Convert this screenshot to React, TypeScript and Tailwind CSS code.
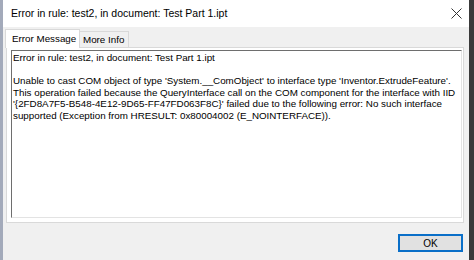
const lines = [
  "Unable to cast COM object of type 'System.__ComObject' to interface type 'Inventor.ExtrudeFeature'.",
  'This operation failed because the QueryInterface call on the COM component for the interface with IID',
  "'{2FD8A7F5-B548-4E12-9D65-FF47FD063F8C}' failed due to the following error: No such interface",
  'supported (Exception from HRESULT: 0x80004002 (E_NOINTERFACE)).',
];

export default function App() {
  return (
    <div className="flex h-[260px] w-[474px] overflow-hidden bg-[#f0f0f0] font-['Liberation_Sans',Arial,sans-serif] text-black">
      <div className="w-[3px] shrink-0 bg-[#a3aaba]" />
      <div className="flex min-w-0 flex-1 flex-col">
        <div className="flex h-[27px] shrink-0 items-center justify-between bg-white pl-[8px] pr-[7px]">
          <span className="text-[10.5px]">Error in rule: test2, in document: Test Part 1.ipt</span>
          <svg width="11" height="11" viewBox="0 0 11 11" className="mb-[1px]">
            <path d="M0.5 0.5 L10.5 10.5 M10.5 0.5 L0.5 10.5" stroke="#333" strokeWidth="1" fill="none" />
          </svg>
        </div>
        <div className="flex flex-1 flex-col pt-[2px]">
          <div className="ml-[2px] flex h-[18px] items-end text-[9.8px]">
            <div className="relative z-10 -mb-[1px] flex h-[19px] w-[75px] items-center border border-b-0 border-[#d9d9d9] bg-white pl-[6px]">
              Error Message
            </div>
            <div className="flex h-[16px] w-[49px] items-center border border-b-0 border-l-0 border-[#d9d9d9] bg-[#f0f0f0] pl-[3px] pt-[1px]">
              More Info
            </div>
          </div>
          <div className="ml-[3px] h-[176px] w-[458px] border border-[#d9d9d9] bg-white pb-[4px] pl-[4px] pr-[1px] pt-[2px]">
            <div className="h-full overflow-hidden border-b border-l border-r border-t border-b-[#e3e3e3] border-l-[#6e6e6e] border-r-[#e3e3e3] border-t-[#6e6e6e] pl-[1px] pt-[1px] text-[9.8px] leading-[11.5px]">
              <p className="whitespace-nowrap">Error in rule: test2, in document: Test Part 1.ipt</p>
              <div className="mt-[11.5px]">
                {lines.map((l) => (
                  <p key={l} className="whitespace-nowrap">
                    {l}
                  </p>
                ))}
              </div>
            </div>
          </div>
          <div className="flex justify-end pr-[6px] pt-[11px]">
            <button className="flex h-[18px] w-[65px] items-center justify-center border-2 border-[#0a6fc8] bg-[#e1e1e1] text-[10px]">
              OK
            </button>
          </div>
        </div>
      </div>
      <div className="w-[5px] shrink-0 bg-[#3a3a3a]" />
    </div>
  );
}
